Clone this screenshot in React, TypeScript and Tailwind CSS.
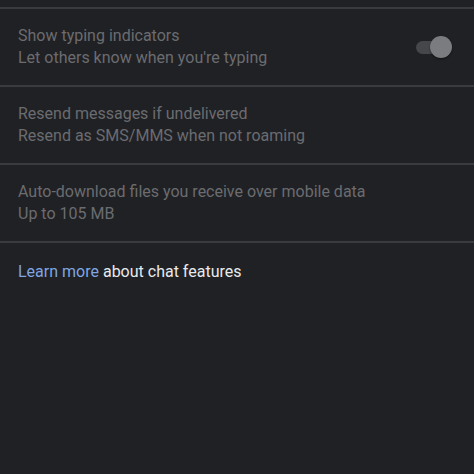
const rows = [
  { title: 'Show typing indicators', sub: "Let others know when you're typing", toggle: true },
  { title: 'Resend messages if undelivered', sub: 'Resend as SMS/MMS when not roaming' },
  { title: 'Auto-download files you receive over mobile data', sub: 'Up to 105 MB' },
];

export default function App() {
  return (
    <div className="w-[474px] h-[474px] bg-[#202124] overflow-hidden" style={{ fontFamily: 'Roboto, "Noto Sans", sans-serif' }}>
      <div className="h-[7px]" />
      {rows.map(r => (
        <div key={r.title} className="border-t-2 border-[#3a3b3e] h-[78px] flex items-center pl-[18px] pr-[22px]">
          <div className="flex-1 text-[16px] leading-[22px] text-[#6b6c70]">
            <div>{r.title}</div>
            <div>{r.sub}</div>
          </div>
          {r.toggle && (
            <div className="relative w-[36px] h-[22px] flex items-center">
              <div className="w-[30px] h-[13px] rounded-full bg-[#46474a]" />
              <div className="absolute right-0 top-0 w-[22px] h-[22px] rounded-full bg-[#7b7c7f] shadow-[0_1px_2px_rgba(0,0,0,0.5)]" />
            </div>
          )}
        </div>
      ))}
      <div className="border-t-2 border-[#3a3b3e] pt-[18px] pl-[18px] text-[16px] leading-[22px] text-[#e8eaed]">
        <span className="text-[#8ab4f8] opacity-90">Learn more</span> about chat features
      </div>
    </div>
  );
}
